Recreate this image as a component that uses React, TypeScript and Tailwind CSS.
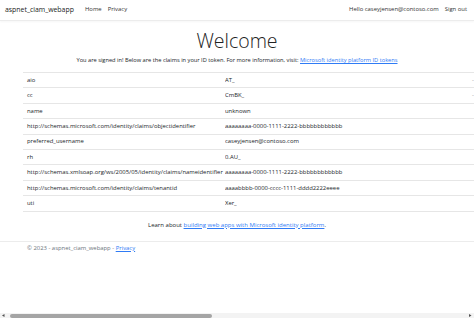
import React from "react";

const claims: [string, string, string?][] = [
  ["aio", "AT_", "-"],
  ["cc", "CmBK_", "-"],
  ["name", "unknown"],
  ["http://schemas.microsoft.com/identity/claims/objectidentifier", "aaaaaaaa-0000-1111-2222-bbbbbbbbbbbb"],
  ["preferred_username", "caseyjensen@contoso.com"],
  ["rh", "0.AU_"],
  ["http://schemas.xmlsoap.org/ws/2005/05/identity/claims/nameidentifier", "aaaaaaaa-0000-1111-2222-bbbbbbbbbbbb"],
  ["http://schemas.microsoft.com/identity/claims/tenantid", "aaaabbbb-0000-cccc-1111-dddd2222eeee"],
  ["uti", "Xer_"],
];

const App = () => {
  return (
    <div className="w-[474px] h-[318px] overflow-hidden flex flex-col bg-white text-[#212529] font-['Open_Sans',sans-serif]">
      {/* navbar */}
      <header className="h-[21px] shrink-0 flex items-center px-[5px] border-b border-[#ececec] shadow-[0_1px_2px_rgba(0,0,0,0.04)]">
        <span className="w-[72px] whitespace-nowrap text-[6.9px] leading-none text-[#222]">aspnet_ciam_webapp</span>
        <nav className="ml-[8px] flex gap-[6px] text-[5.9px] leading-none text-[#333]">
          <span>Home</span>
          <span>Privacy</span>
        </nav>
        <div className="ml-auto flex gap-[6px] pr-[2px] text-[5.9px] leading-none text-[#333]">
          <span>Hello caseyjensen@contoso.com</span>
          <span>Sign out</span>
        </div>
      </header>

      <main className="flex flex-col shrink-0">
        <h1 className="mt-[6px] text-center text-[19.5px] leading-[27px] font-light text-[#222]">Welcome</h1>
        <p className="mt-[1px] text-center text-[5.7px] leading-[10px]">
          You are signed in! Below are the claims in your ID token. For more information, visit:{" "}
          <span className="text-[#2f7bf5] underline">Microsoft identity platform ID tokens</span>
        </p>

        <div className="mt-[7px] ml-[23px] w-[520px] border-t border-[#e6e6e6] text-[5.9px]">
          {claims.map(([k, v, extra]) => (
            <div key={k} className="flex items-center h-[15.4px] border-b border-[#e6e6e6]">
              <div className="w-[202px] pl-[4px] truncate">{k}</div>
              <div className="w-[247px] truncate">{v}</div>
              <div className="w-[60px] text-[#999]">{extra ?? ""}</div>
            </div>
          ))}
        </div>

        <p className="mt-[8px] text-center text-[6px] leading-[10px]">
          Learn about <span className="text-[#2f7bf5] underline">building web apps with Microsoft identity platform</span>.
        </p>
      </main>

      <footer className="mt-[11px] shrink-0 border-t border-[#ececec] pt-[1px] pl-[27px] text-[5.9px] leading-[10px] text-[#6c757d]">
        © 2023 - aspnet_ciam_webapp - <span className="text-[#2f7bf5] underline">Privacy</span>
      </footer>

      <div className="flex-1" />

      {/* horizontal scrollbar */}
      <div className="h-[5px] shrink-0 flex items-center bg-[#f3f3f3]">
        <svg width="7" height="5" viewBox="0 0 7 5" className="shrink-0">
          <path d="M4.5 1 L2 2.5 L4.5 4 Z" fill="#505050" />
        </svg>
        <div className="ml-[3px] w-[202px] h-[4px] rounded-[2px] bg-[#a5a5a5]" />
        <div className="flex-1" />
        <svg width="7" height="5" viewBox="0 0 7 5" className="shrink-0">
          <path d="M2 1 L4.5 2.5 L2 4 Z" fill="#505050" />
        </svg>
      </div>
    </div>
  );
};

export default App;
